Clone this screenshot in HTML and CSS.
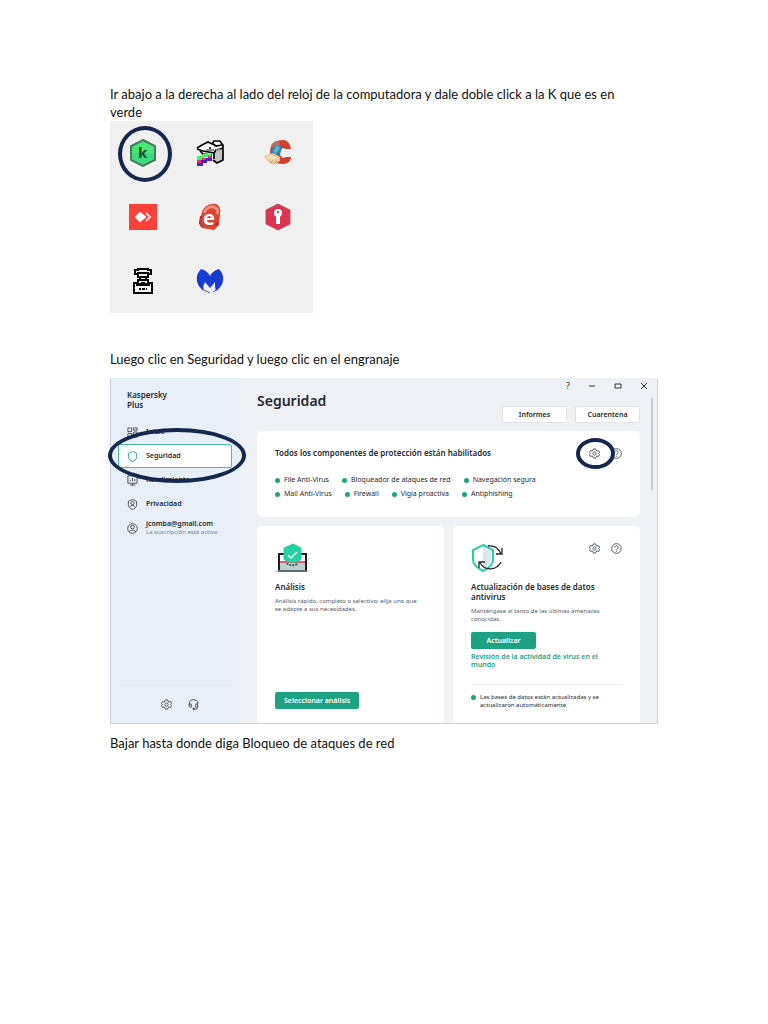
FILE: index.html
```
<!DOCTYPE html>
<html lang="es">
<head>
    <meta charset="UTF-8">
    <meta name="viewport" content="width=device-width, initial-scale=1.0">
    <title>Bloqueo de ataques de red</title>
    <link rel="stylesheet" href="styles.css">
</head>
<body>
    <svg class="symbols" aria-hidden="true">
        <symbol id="gear" viewBox="0 0 24 24">
            <path d="M9.500 2h5l1 3.400 2 1.200 3.500-.9 2.200 4.100-2.300 2.200 2.300 2.300-2.200 4.100-3.500-.9-2 1.200-1 3.300h-5l-1-3.300-2-1.200-3.500.9L.8 14.300l2.300-2.300L.8 9.800 3 5.700l3.500.9 2-1.200z"/>
            <circle cx="12" cy="12" r="3.500"/>
        </symbol>
        <symbol id="help" viewBox="0 0 24 24">
            <circle cx="12" cy="12" r="10.500"/>
            <path d="M8.500 9.500a3.500 3.500 0 1 1 5.400 2.900c-1.200.8-1.900 1.200-1.900 2.600M12 17v2"/>
        </symbol>
    </svg>

    <main class="document">
        <p class="step-tray">Ir abajo a la derecha al lado del reloj de la computadora y dale doble click a la K que es en verde</p>

        <div class="tray">
            <div class="tray-item marked">
                <svg viewBox="0 0 28 28">
                    <path d="M14 1 26 7v14l-12 6L2 21V7z" fill="#3edb83" stroke="#4b7a5d" stroke-width="2"/>
                    <path d="M14 3 24 8v6H4V8z" fill="#48e872"/>
                    <text x="9" y="19" class="k-letter">k</text>
                </svg>
                <span class="ring ring-tray"></span>
            </div>
            <div class="tray-item">
                <svg viewBox="0 0 28 28">
                    <path d="M1 10 11 4l5 1 2-4h6l2 4 2 1v15l-7 3-5-4-12-6z" fill="#fafafa"/>
                    <path d="M19 13l8-4v11l-6 3-2-1z" fill="#c4c4c4"/>
                    <path d="M1 9l5-3 6-3 4 2 2-3h6l2 3 1 1v15l-6 3-4-3M1 10l6 2 11 2v6M18 14l2-3 7-2M17 5l3 2 6-1M4 12l3 3 9 1" fill="none" stroke="#000" stroke-width="1.700"/>
                    <path d="M10 11h8M20 11l4-1" stroke="#8a8a8a" stroke-width="2"/>
                    <path d="M13 8h2v2h-2z" fill="#3634ad"/>
                    <path d="M1 17h6v-2h8v3H8v3H1z" fill="#3af765"/>
                    <path d="M1 21h5v-2h6v-2h4v4h-5v3H1z" fill="#f03065"/>
                    <path d="M1 24h4v-3h5v-2h6v3h-5v2H7v3H1z" fill="#4722c8"/>
                </svg>
            </div>
            <div class="tray-item">
                <svg viewBox="0 0 28 28">
                    <path d="M27 10h-5c-3-2-6 0-6 4s3 6 6 4h5c0 4-3 7-8 7C10 25 6 21 6 14 6 5 11 1 19 1c4 0 7 3 8 9z" fill="#d2402c"/>
                    <path d="M7 7c1-4 5-5 8-5l2 7-6 3z" fill="#b56e61"/>
                    <path d="M11 7c3-2 7-1 7 2l-3 9-8-2c0-4 1-7 4-9z" fill="#2685b7"/>
                    <path d="M9 12l4-6 3 3-4 6z" fill="#63add0"/>
                    <path d="M0 17l9-3 7 4v4l-7 4-6-4z" fill="#eac99e"/>
                    <path d="M1 18l7-2 6 3-7 2z" fill="#f6dfb4"/>
                    <path d="M6 24l3-2M10 25l3-3" stroke="#b8905a"/>
                </svg>
            </div>
            <div class="tray-item">
                <svg viewBox="0 0 28 28">
                    <path d="M0 1h28v26H0z" fill="#fd4038"/>
                    <path d="M7 14l4-4 5 4-5 4z" fill="#fff" stroke="#fff" stroke-width="2" stroke-linejoin="round"/>
                    <path d="M17 10l4 4-4 4" fill="none" stroke="#ffd5d1" stroke-width="2"/>
                </svg>
            </div>
            <div class="tray-item">
                <svg viewBox="0 0 28 28">
                    <path d="M6 9C8 3 14 0 20 1c4 2 5 6 4 10l-1 11-5 5-12-2-3-5z" fill="#dc4330"/>
                    <path d="M8 10c2-5 6-7 10-6s4 4 3 7" fill="none" stroke="#ef9185" stroke-width="3"/>
                    <path d="M5 13l-1 7 2 4M19 23l3-3" fill="none" stroke="#ab3d32" stroke-width="2"/>
                    <text x="7" y="22" class="e-letter">e</text>
                </svg>
            </div>
            <div class="tray-item">
                <svg viewBox="0 0 28 28">
                    <path d="M14 1 26 7v14l-12 6L2 21V7z" fill="#dc3450" stroke="#bd536a"/>
                    <circle cx="14" cy="10" r="4" fill="#fff"/>
                    <path d="M12 12h4v9h-4z" fill="#fff"/>
                    <path d="M13 8h2v2h-2z" fill="#b74256"/>
                </svg>
            </div>
            <div class="tray-item">
                <svg viewBox="0 0 28 28" fill="none" stroke="#000" stroke-width="2">
                    <path d="M5 16h3v2h12v-2h3v10H5z" fill="#fff"/>
                    <path d="M6 5V3h3V2h10v1h3v2M6 5v2h3V6h10v1h3V5M9 10h10M10 13h8M9 7v3h2v3H9v4h10v-4h-2v-3h2V7M12 16h4"/>
                    <path d="M10 22h2M13 22h3M17 22h1"/>
                </svg>
            </div>
            <div class="tray-item">
                <svg viewBox="0 0 28 28">
                    <path d="M5 2c4 1 7 3 9 7 2-4 5-6 9-7 6 6 6 16-3 22-1-3-1-5-1-9l-5 6-5-6c-2 4-2 6-1 9C-1 18-1 8 5 2z" fill="#163cd2"/>
                    <path d="M8 23l6 3M17 25l3-2" stroke="#48578b" stroke-width="1"/>
                </svg>
            </div>
        </div>

        <p class="step-security">Luego clic en Seguridad y luego clic en el engranaje</p>

        <section class="app">
            <aside class="sidebar">
                <div class="brand">Kaspersky<br>Plus</div>
                <nav>
                    <a href="#inicio">
                        <svg viewBox="0 0 24 24"><path d="M2 2h8v8H2zM14 2h8v5h-8zM2 14h8v8H2zM14 11h8v11h-8zM14 17h8"/></svg>
                        Inicio
                    </a>
                    <a href="#seguridad" class="active">
                        <svg viewBox="0 0 24 24"><path d="M12 1l9 4v7c0 6-4 9-9 11-5-2-9-5-9-11V5z"/></svg>
                        Seguridad
                    </a>
                    <a href="#rendimiento">
                        <svg viewBox="0 0 24 24"><path d="M2 2h20v16H2zM12 18v4M6 22h12M7 14v-4M12 14V6M17 14V9"/></svg>
                        Rendimiento
                    </a>
                    <a href="#privacidad">
                        <svg viewBox="0 0 24 24"><path d="M12 1l9 4v7c0 6-4 9-9 11-5-2-9-5-9-11V5zM7 17c1-4 9-4 10 0"/><circle cx="12" cy="9" r="3.500"/></svg>
                        Privacidad
                    </a>
                    <a href="#cuenta">
                        <svg viewBox="0 0 24 24"><circle cx="12" cy="12" r="10.500"/><circle cx="12" cy="9" r="4"/><path d="M5 20c2-6 12-6 14 0"/></svg>
                        <span class="account">jcomba@gmail.com<small>La suscripción está activa</small></span>
                    </a>
                    <span class="ring ring-nav"></span>
                </nav>
                <div class="sidebar-tools">
                    <button class="icon-button" aria-label="Configuración"><svg><use href="#gear"/></svg></button>
                    <button class="icon-button" aria-label="Soporte">
                        <svg viewBox="0 0 24 24"><path d="M3 13V9c0-10 18-10 18 0v10c0 2-2 3-5 3h-3M3 11h4v7H5c-3 0-3-5-2-7zM21 11h-4v7h4M11 20h3v3h-3z"/></svg>
                    </button>
                </div>
            </aside>

            <div class="content">
                <div class="window-controls">
                    <button aria-label="Ayuda">?</button>
                    <button aria-label="Minimizar"><svg viewBox="0 0 8 8"><path d="M1 4h6"/></svg></button>
                    <button aria-label="Maximizar"><svg viewBox="0 0 8 8"><path d="M1 2h6v4H1z"/></svg></button>
                    <button aria-label="Cerrar"><svg viewBox="0 0 8 8"><path d="M1 1l6 6M7 1L1 7"/></svg></button>
                </div>
                <header>
                    <h1>Seguridad</h1>
                    <div class="header-buttons">
                        <button>Informes</button>
                        <button>Cuarentena</button>
                    </div>
                </header>

                <section class="card status">
                    <div class="status-top">
                        <h2>Todos los componentes de protección están habilitados</h2>
                        <div class="card-tools">
                            <button class="icon-button marked" aria-label="Configuración"><svg><use href="#gear"/></svg><span class="ring ring-gear"></span></button>
                            <button class="icon-button" aria-label="Ayuda"><svg><use href="#help"/></svg></button>
                        </div>
                    </div>
                    <ul class="components">
                        <li>File Anti-Virus</li>
                        <li>Bloqueador de ataques de red</li>
                        <li>Navegación segura</li>
                    </ul>
                    <ul class="components">
                        <li>Mail Anti-Virus</li>
                        <li>Firewall</li>
                        <li>Vigía proactiva</li>
                        <li>Antiphishing</li>
                    </ul>
                </section>

                <div class="cards">
                    <section class="card scan">
                        <svg class="picture" viewBox="0 0 34 30">
                            <path d="M4 11h27v17H4z" fill="#fff" stroke="#1d1d20" stroke-width="2"/>
                            <path d="M5 19h25v8H5z" fill="#bdd0d4"/>
                            <path d="M5 19h25" stroke="#e75b6d" stroke-width="2"/>
                            <path d="M12 20c1 3 9 3 11 0" fill="none" stroke="#48565b" stroke-width="2" stroke-dasharray="2 1"/>
                            <path d="M0 28h34" stroke="#a5bcc2" stroke-width="1"/>
                            <path d="M18 1l8 4v11l-3 3H12l-3-3V5z" fill="#22d2a5" stroke="#22d2a5" stroke-linejoin="round"/>
                            <path d="M13 12l3 3 6-6" fill="none" stroke="#fff" stroke-width="1.500"/>
                        </svg>
                        <h2>Análisis</h2>
                        <p>Análisis rápido, completo o selectivo: elija uno que se adapte a sus necesidades.</p>
                        <button class="primary">Seleccionar análisis</button>
                    </section>

                    <section class="card update">
                        <div class="update-top">
                            <svg class="picture" viewBox="0 0 34 30">
                                <path d="M12 2l10 5v10c0 5-4 8-10 11C6 25 2 22 2 17V7z" fill="#fff" stroke="#22d2a5" stroke-width="2"/>
                                <path d="M12 4l8 4v9c0 4-3 6-8 9z" fill="#dce8f0"/>
                                <path d="M17 3c7-1 11 3 13 8M31 5v6h-6M30 19c-4 8-15 10-21 1M8 25v-6h6" fill="none" stroke="#222328" stroke-width="1.300"/>
                            </svg>
                            <div class="card-tools">
                                <button class="icon-button" aria-label="Configuración"><svg><use href="#gear"/></svg></button>
                                <button class="icon-button" aria-label="Ayuda"><svg><use href="#help"/></svg></button>
                            </div>
                        </div>
                        <h2>Actualización de bases de datos antivirus</h2>
                        <p>Manténgase al tanto de las últimas amenazas conocidas.</p>
                        <button class="primary">Actualizar</button>
                        <a href="#actividad" class="activity">Revisión de la actividad de virus en el mundo</a>
                        <ul class="database">
                            <li>Las bases de datos están actualizadas y se actualizaron automáticamente</li>
                        </ul>
                    </section>
                </div>
                <span class="scrollbar"></span>
            </div>
        </section>

        <p class="step-network">Bajar hasta donde diga Bloqueo de ataques de red</p>
    </main>
</body>
</html>
```

FILE: styles.css
```
* {
    box-sizing: border-box;
}
body {
    margin: 0;
    background: #fff;
    color: #111;
    font-family: Lato, "Open Sans", sans-serif;
    font-size: 13px;
    line-height: 18px;
}
h1, h2, p, ul {
    margin: 0;
    padding: 0;
}
button {
    padding: 0;
    border: none;
    background: none;
    color: inherit;
    font: inherit;
    cursor: pointer;
}
a {
    color: inherit;
    text-decoration: none;
}
svg {
    display: block;
}
.symbols {
    position: absolute;
    width: 0;
    height: 0;
}
.document {
    padding: 85px 110px;
}

/* hand-drawn style marks over the captures */
.marked {
    position: relative;
}
.ring {
    position: absolute;
    border: 4px solid #14284f;
    border-radius: 50%;
    pointer-events: none;
}
.ring-tray {
    width: 54px;
    height: 56px;
    left: 8px;
    top: 5px;
}
.ring-nav {
    width: 138px;
    height: 55px;
    left: -3px;
    top: 8px;
}
.ring-gear {
    width: 39px;
    height: 31px;
    left: -13px;
    top: -10px;
}

/* tray icons */
.step-tray {
    padding-right: 20px;
}
.tray {
    display: grid;
    grid-template-columns: repeat(3, 1fr);
    grid-auto-rows: 64px;
    max-width: 203px;
    background: #f0f0f0;
}
.tray-item {
    display: flex;
    align-items: center;
    justify-content: center;
    padding-right: 2px;
}
.tray-item svg {
    width: 28px;
    height: 28px;
}
.k-letter {
    fill: #14532f;
    font: bold 15px "Open Sans", sans-serif;
}
.e-letter {
    fill: #fff;
    font: bold 20px "Open Sans", sans-serif;
}
.step-security {
    margin: 37px 0 10px;
}
.step-network {
    margin-top: 10px;
}

/* application window */
.app {
    display: flex;
    background: #eef1f6;
    border: 1px solid #c9d2e0;
    border-top: none;
    font-family: "Noto Sans", sans-serif;
    font-size: 7px;
    line-height: 8px;
    color: #25292e;
}
.app h2 {
    font-size: 8px;
    font-weight: 600;
    line-height: 10px;
}
.sidebar {
    display: flex;
    flex-direction: column;
    flex: 0 0 129px;
    background: #e9eff8;
    font-weight: 600;
}
.brand {
    padding: 12px 16px 10px;
    font-size: 8px;
    line-height: 10px;
}
nav {
    position: relative;
    display: flex;
    flex-direction: column;
    padding: 0 8px 0 7px;
}
nav a {
    display: flex;
    align-items: center;
    gap: 8px;
    height: 24px;
    padding: 0 8px;
    border: 1px solid transparent;
    border-radius: 2px;
}
nav svg, .icon-button svg {
    width: 11px;
    height: 11px;
    fill: none;
    stroke: #454c57;
    stroke-width: 2;
}
nav .active {
    background: #fff;
    border-color: #4dbf9f;
}
nav .active svg {
    stroke: #1da384;
}
.account small {
    display: block;
    font-size: 6px;
    font-weight: 400;
    color: #7b8390;
}
.sidebar-tools {
    display: flex;
    gap: 16px;
    margin: auto 8px 0;
    padding: 13px 0 13px 42px;
    border-top: 1px solid #dde4ed;
}
.content {
    position: relative;
    flex: 1;
    min-width: 0;
    padding: 0 17px;
}
.window-controls {
    display: flex;
    justify-content: flex-end;
    align-items: center;
    gap: 18px;
    height: 15px;
    margin-right: -8px;
    font-size: 9px;
}
.window-controls svg {
    width: 8px;
    height: 8px;
    fill: none;
    stroke: #333;
}
header {
    display: flex;
    justify-content: space-between;
    height: 38px;
}
h1 {
    font-size: 14px;
    font-weight: 600;
    line-height: 16px;
}
.header-buttons {
    display: flex;
    gap: 8px;
    padding-top: 13px;
}
.header-buttons button {
    width: 65px;
    height: 17px;
    background: #fff;
    border: 1px solid #dfe3e8;
    border-radius: 2px;
    font-weight: 600;
}
.card {
    background: #fff;
    border-radius: 5px;
    padding: 17px 18px;
}
.status {
    height: 86px;
}
.status-top, .update-top {
    display: flex;
    justify-content: space-between;
}
.status-top {
    margin-bottom: 17px;
}
.card-tools {
    display: flex;
    gap: 11px;
}
.icon-button {
    width: 11px;
    height: 11px;
}
.components {
    display: flex;
    gap: 13px;
    margin-bottom: 6px;
    list-style: none;
}
.components li, .database li {
    display: flex;
    gap: 4px;
}
.components li::before, .database li::before {
    content: "";
    flex: 0 0 5px;
    height: 5px;
    margin-top: 2px;
    border-radius: 50%;
    background: #1da384;
}
.cards {
    display: grid;
    grid-template-columns: 1fr 1fr;
    gap: 9px;
    padding-top: 9px;
}
.cards .card {
    display: flex;
    flex-direction: column;
    align-items: flex-start;
    border-radius: 5px 5px 0 0;
    padding-bottom: 14px;
}
.picture {
    width: 34px;
    height: 30px;
}
.cards h2 {
    margin: 9px 0 5px;
}
.cards p {
    max-width: 148px;
    font-size: 6px;
    color: #555d68;
}
.primary {
    height: 17px;
    padding: 0 9px;
    border-radius: 2px;
    background: #1da384;
    color: #fff;
    font-weight: 600;
}
.scan .primary {
    margin-top: auto;
}
.update-top {
    align-self: stretch;
}
.update .primary {
    min-width: 65px;
    margin: 9px 0 4px;
}
.activity {
    max-width: 140px;
    color: #1da384;
    font-weight: 600;
}
.database {
    align-self: stretch;
    margin-top: 15px;
    padding-top: 8px;
    border-top: 1px solid #edf0f3;
    font-size: 6px;
    list-style: none;
}
.scrollbar {
    position: absolute;
    top: 20px;
    right: 4px;
    width: 2px;
    height: 92px;
    border-radius: 1px;
    background: #c5cad2;
}
```
